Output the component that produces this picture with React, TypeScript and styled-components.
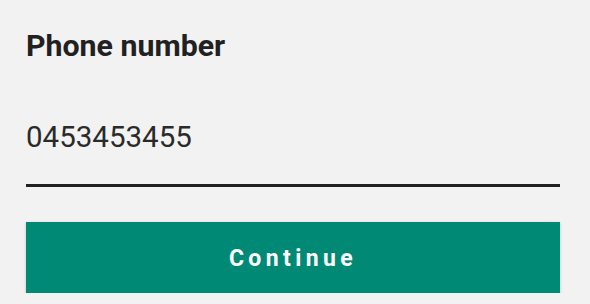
import styled, { createGlobalStyle } from 'styled-components'

const GlobalStyle = createGlobalStyle`
    html, body {
        margin: 0;
        padding: 0;
        background: #f2f2f2;
        font-family: Roboto, "Liberation Sans", sans-serif;
    }
`

const Form = styled.form`
    display: flex;
    flex-direction: column;
    padding: 29px 30px 0 26px;
`

const Label = styled.label`
    font-size: 30.3px;
    line-height: 34px;
    font-weight: 700;
    color: #212121;
`

const PhoneInput = styled.input`
    margin-top: 57px;
    padding: 0 0 30px;
    height: 34px;
    border: none;
    border-bottom: 3px solid #212121;
    background: transparent;
    font-family: Roboto, "Liberation Sans", sans-serif;
    font-size: 29.5px;
    color: #2a2a2a;
    outline: none;
`

const ContinueButton = styled.button`
    margin-top: 35px;
    height: 71px;
    padding: 2px 0 0;
    border: none;
    background: #008a76;
    color: #ffffff;
    font-family: Roboto, "Liberation Sans", sans-serif;
    font-size: 23px;
    font-weight: 700;
    letter-spacing: 4.4px;
    box-shadow: 0 1px 3px rgba(0, 0, 0, 0.2);
    cursor: pointer;
`

const App = () => {
    return (
        <>
            <GlobalStyle />
            <Form onSubmit={(e) => e.preventDefault()}>
                <Label htmlFor="phone">Phone number</Label>
                <PhoneInput id="phone" type="tel" defaultValue="0453453455" />
                <ContinueButton type="submit">Continue</ContinueButton>
            </Form>
        </>
    )
}

export default App
